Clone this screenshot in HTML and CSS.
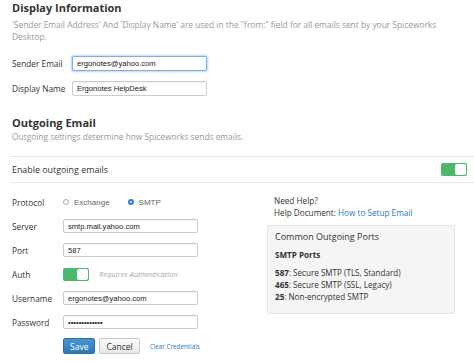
FILE: index.html
```html
<!DOCTYPE html>
<html lang="en">
<head>
  <meta charset="UTF-8" />
  <title>Email Settings</title>
  <link rel="stylesheet" href="styles.css">
</head>
<body>

  <div class="page">

    <div class="section">
      <h2 class="section-title">Display Information</h2>
      <p class="section-desc">'Sender Email Address' And 'Display Name' are used in the "from:" field for all emails sent by your Spiceworks Desktop.</p>

      <div class="form-row wide">
        <label>Sender Email</label>
        <input class="text-input focused" type="text" value="ergonotes@yahoo.com">
      </div>
      <div class="form-row wide">
        <label>Display Name</label>
        <input class="text-input" type="text" value="Ergonotes HelpDesk">
      </div>
    </div>

    <div class="section outgoing">
      <h2 class="section-title">Outgoing Email</h2>
      <p class="section-desc">Outgoing settings determine how Spiceworks sends emails.</p>
    </div>

    <div class="enable-row">
      <span>Enable outgoing emails</span>
      <span class="toggle on"><span class="knob"></span></span>
    </div>

    <div class="outgoing-body">
      <div class="left-col">
        <div class="form-row">
          <label>Protocol</label>
          <div class="radios">
            <span class="radio"></span><span class="radio-text">Exchange</span>
            <span class="radio checked"></span><span class="radio-text">SMTP</span>
          </div>
        </div>
        <div class="form-row">
          <label>Server</label>
          <input class="text-input" type="text" value="smtp.mail.yahoo.com">
        </div>
        <div class="form-row">
          <label>Port</label>
          <input class="text-input" type="text" value="587">
        </div>
        <div class="form-row">
          <label>Auth</label>
          <span class="toggle on"><span class="knob"></span></span>
          <span class="hint">Requires Authentication</span>
        </div>
        <div class="form-row">
          <label>Username</label>
          <input class="text-input" type="text" value="ergonotes@yahoo.com">
        </div>
        <div class="form-row">
          <label>Password</label>
          <input class="text-input" type="password" value="passwordpassw">
        </div>
        <div class="form-row actions">
          <label></label>
          <button class="btn btn-primary">Save</button>
          <button class="btn">Cancel</button>
          <a class="link small-link" href="#">Clear Credentials</a>
        </div>
      </div>

      <div class="right-col">
        <div class="help">
          <div>Need Help?</div>
          <div>Help Document: <a class="link" href="#">How to Setup Email</a></div>
        </div>
        <div class="ports-box">
          <div class="ports-title">Common Outgoing Ports</div>
          <div class="ports-sub">SMTP Ports</div>
          <div><b>587</b>: Secure SMTP (TLS, Standard)</div>
          <div><b>465</b>: Secure SMTP (SSL, Legacy)</div>
          <div><b>25</b>: Non-encrypted SMTP</div>
        </div>
      </div>
    </div>

  </div>

</body>
</html>
```

FILE: styles.css
```css
body {
  margin: 0;
  font-family: 'Open Sans', sans-serif;
  font-size: 8.3px;
  color: #333;
  background: #fff;
}

.page {
  padding-left: 10px;
}

.section {
  padding-left: 2px;
}

.section-title {
  margin: 0;
  font-size: 11px;
  line-height: 16px;
  font-weight: 700;
  color: #333;
}

.section-desc {
  max-width: 430px;
  margin: 3px 0 0;
  font-size: 8.4px;
  line-height: 12px;
  color: #999;
}

.outgoing {
  margin-top: 19px;
}

.outgoing .section-desc {
  margin-top: 0;
}

/* form rows */
.form-row {
  display: flex;
  align-items: center;
  height: 15px;
  margin-bottom: 10px;
}

.form-row label {
  width: 51px;
  flex: none;
}

.form-row.wide label {
  width: 60px;
}

.section .form-row:first-of-type {
  margin-top: 13px;
}

.text-input {
  box-sizing: border-box;
  width: 135px;
  height: 15px;
  padding: 0 4px;
  border: 1px solid #ccc;
  border-radius: 2px;
  font-family: 'Liberation Sans', Arial, sans-serif;
  font-size: 7.6px;
  color: #222;
  background: #fff;
  box-shadow: inset 0 1px 1px rgba(0,0,0,0.06);
}

.text-input.focused {
  border-color: #7fb0e0;
  box-shadow: 0 0 2px 1px rgba(100,160,230,0.45);
}

/* enable row */
.enable-row {
  display: flex;
  justify-content: space-between;
  align-items: center;
  height: 25px;
  margin-top: 13px;
  padding: 0 7px 0 2px;
  border-top: 1px solid #e6e6e6;
  border-bottom: 1px solid #e6e6e6;
  font-size: 8.9px;
}

.toggle {
  display: inline-flex;
  justify-content: flex-end;
  box-sizing: border-box;
  width: 26px;
  height: 13px;
  padding: 1px;
  border-radius: 2px;
  background: #4cb86b;
}

.knob {
  width: 11px;
  height: 11px;
  border-radius: 2px;
  background: #fff;
}

.hint {
  margin-left: 10px;
  font-style: italic;
  font-size: 7.5px;
  color: #aaa;
}

/* outgoing body */
.outgoing-body {
  display: flex;
  margin-top: 12px;
  padding-left: 2px;
}

.left-col {
  width: 186px;
}

.left-col .form-row {
  height: 14px;
}

.left-col .text-input {
  height: 14px;
}

.radios {
  display: flex;
  align-items: center;
  font-family: 'Liberation Sans', Arial, sans-serif;
  font-size: 8px;
  color: #777;
}

.radio {
  box-sizing: border-box;
  width: 6px;
  height: 6px;
  border: 1px solid #aaa;
  border-radius: 50%;
  margin-right: 5px;
}

.radio.checked {
  border: 2px solid #2f7fd0;
  margin-left: 18px;
}

.radio-text {
  color: #666;
}

.actions {
  height: 16px;
}

.btn {
  height: 16px;
  padding: 0 6px;
  margin-right: 4px;
  border: 1px solid #c8c8c8;
  border-radius: 2px;
  background: linear-gradient(#fafafa, #e8e8e8);
  font-family: 'Open Sans', sans-serif;
  font-size: 8.5px;
  color: #333;
}

.btn-primary {
  border-color: #2b6fa6;
  background: linear-gradient(#4a95cf, #2f79b5);
  color: #fff;
}

.link {
  color: #2f7ab8;
  text-decoration: none;
}

.small-link {
  margin-left: 6px;
  font-size: 6.3px;
  white-space: nowrap;
}

.right-col {
  width: 188px;
  margin-left: 69px;
}

.help {
  padding-left: 7px;
  line-height: 12px;
  font-size: 8.2px;
}

.ports-box {
  margin-top: 6px;
  padding: 5px 7px 10px;
  border: 1px solid #e4e4e4;
  border-radius: 2px;
  background: #f5f5f5;
  font-size: 8.1px;
  line-height: 12px;
}

.ports-title {
  font-size: 9px;
  margin-bottom: 6px;
}

.ports-sub {
  font-weight: 700;
  margin-bottom: 6px;
}
```
